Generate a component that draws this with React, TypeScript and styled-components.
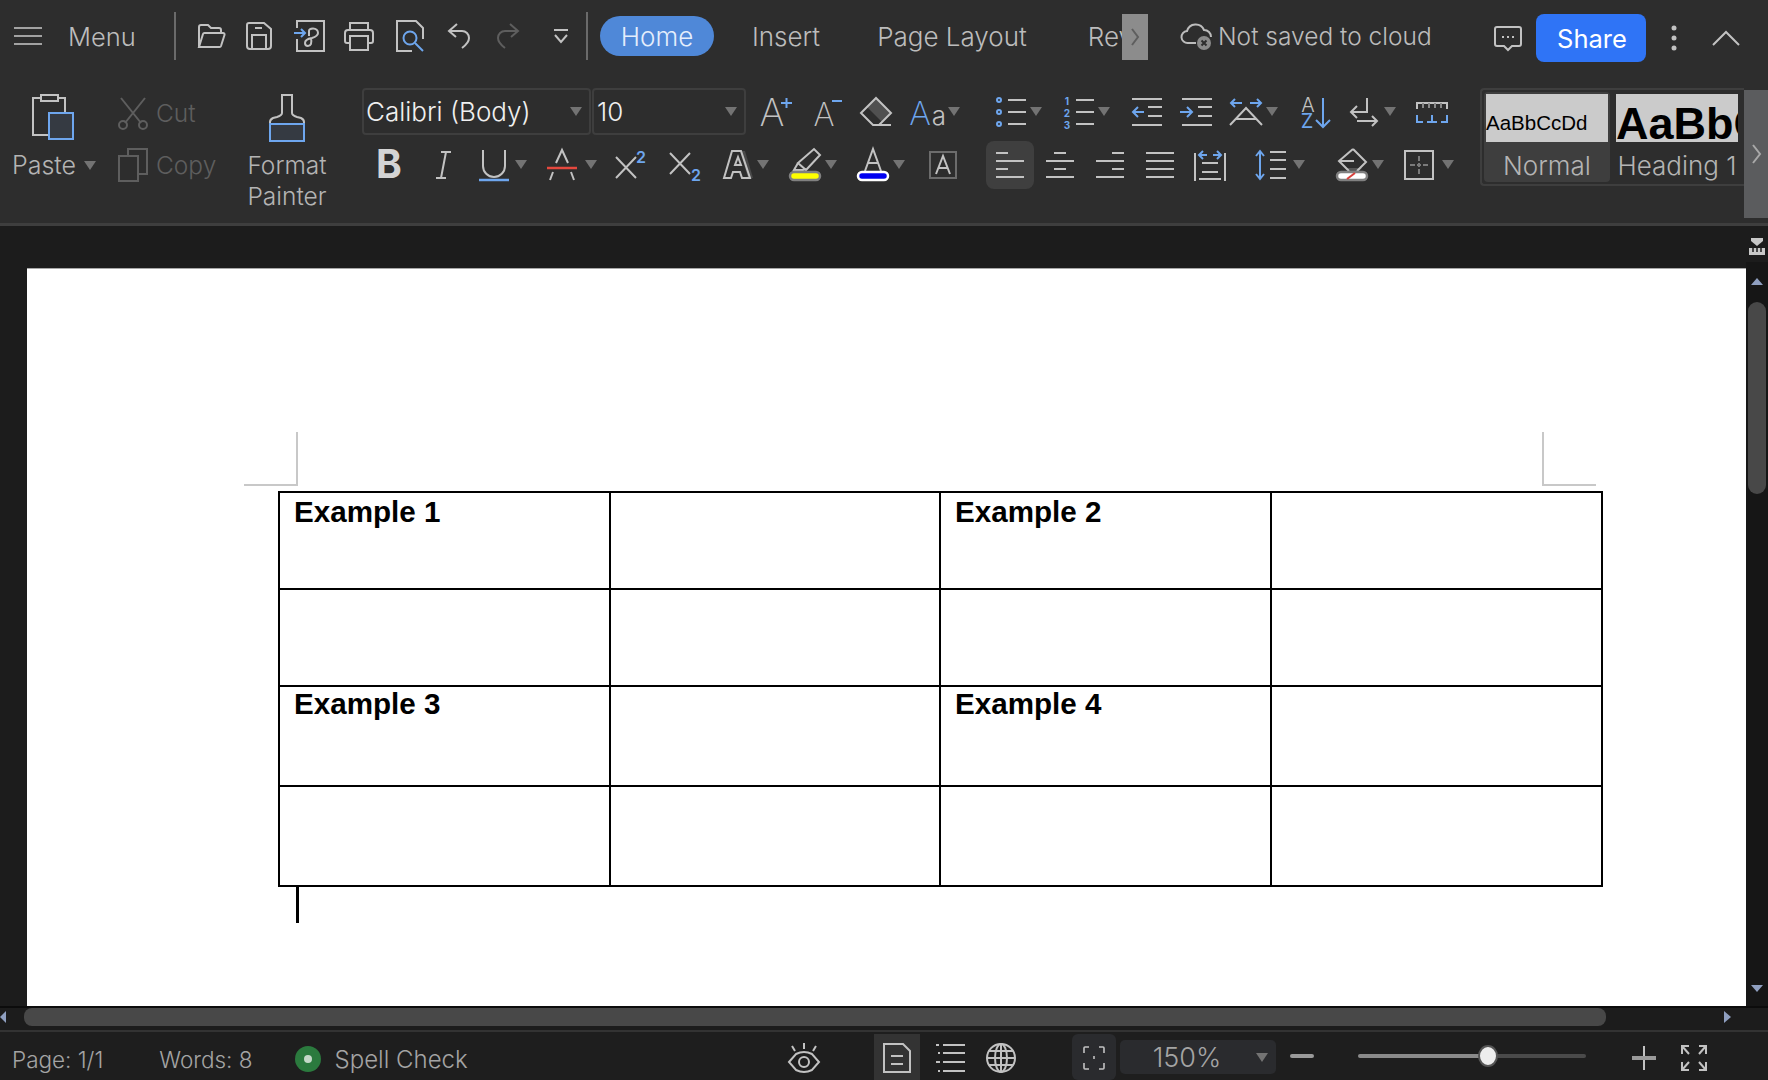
import React from "react";
import styled, { createGlobalStyle } from "styled-components";

const LIGHT = "#c2c2c2";
const DIM = "#5e5e5e";
const BLUE = "#6ea6ee";
const UI_FONT = `Inter, "Noto Sans", sans-serif`;

const GlobalStyle = createGlobalStyle`
  html, body {
    margin: 0;
    padding: 0;
    background: #1c1c1c;
    overflow: hidden;
  }
  * {
    box-sizing: border-box;
  }
`;

type SvgProps = { w: number; h: number; sw?: number; children: React.ReactNode };

const Svg = ({ w, h, sw = 2, children }: SvgProps) => (
  <svg
    width={w}
    height={h}
    viewBox={`0 0 ${w} ${h}`}
    fill="none"
    stroke="currentColor"
    strokeWidth={sw}
    style={{ display: "block", overflow: "visible" }}
  >
    {children}
  </svg>
);

// letters inside icons stay real text
const Letter = ({
  x,
  y,
  size,
  color = LIGHT,
  weight = 300,
  children,
}: {
  x: number;
  y: number;
  size: number;
  color?: string;
  weight?: number;
  children: React.ReactNode;
}) => (
  <text
    x={x}
    y={y}
    fontSize={size}
    fontWeight={weight}
    fontFamily={UI_FONT}
    fill={color}
    stroke="none"
    textAnchor="middle"
  >
    {children}
  </text>
);

const MenuIcon = () => (
  <Svg w={28} h={18}>
    <path d="M0 1h28M0 9h28M0 17h28" stroke="#a2a2a2" />
  </Svg>
);
const FolderIcon = () => (
  <Svg w={30} h={26}>
    <path d="M3 24V4a2 2 0 0 1 2-2h7l3 3h8a2 2 0 0 1 2 2v3" />
    <path d="M3 24l4-13a1.500 1.500 0 0 1 1.500-1H27a1.500 1.500 0 0 1 1.500 2L25 23a1.500 1.500 0 0 1-1.500 1z" />
  </Svg>
);
const SaveIcon = () => (
  <Svg w={26} h={28}>
    <path d="M3 1h15l7 6v17a3 3 0 0 1-3 3H4a3 3 0 0 1-3-3V3a2 2 0 0 1 2-2z" />
    <path d="M6 27V13h14v14M9 6h7" />
  </Svg>
);
const ImportIcon = () => (
  <Svg w={28} h={32}>
    <path d="M1 8V1h27v30H1V19" />
    <path d="M-2 13H9M5 9l4 4-4 4" stroke={BLUE} />
    <path d="M13 16V11c0-1.500 2-2.500 4-2.500 3 0 5 2 5 4.500 0 3-3 4-6 5-3 .5-7 2-7 5 0 2 1.500 3 3 3 3 0 4-3 3-8" />
  </Svg>
);
const PrintIcon = () => (
  <Svg w={30} h={30}>
    <path d="M6 9V2h18v7M6 22H3a2 2 0 0 1-2-2v-8a3 3 0 0 1 3-3h22a3 3 0 0 1 3 3v8a2 2 0 0 1-2 2h-3" />
    <rect x={6} y={15} width={18} height={14} />
  </Svg>
);
const PreviewIcon = () => (
  <Svg w={28} h={32}>
    <path d="M27 19V8l-7-7H1v30h15" />
    <circle cx={14} cy={18} r={6.500} stroke={BLUE} />
    <path d="M19 23l8 8" stroke={BLUE} />
  </Svg>
);
const UndoIcon = () => (
  <Svg w={24} h={26}>
    <path d="M10 1L2 8l7 6M2 8h13a7 7 0 0 1 7 7c0 3-3 7-7 10" />
  </Svg>
);
const RedoIcon = () => (
  <Svg w={24} h={26}>
    <path d="M14 1l8 7-7 6M22 8H9a7 7 0 0 0-7 7c0 3 3 7 7 10" />
  </Svg>
);
const QuickMoreIcon = () => (
  <Svg w={16} h={16}>
    <path d="M1 2h14M2 7l6 7 6-7" />
  </Svg>
);
const CloudIcon = () => (
  <Svg w={32} h={30}>
    <path d="M16 22H8a6 6 0 0 1-1-12 9 9 0 0 1 17-1c4 0 7 3 7 7" />
    <circle cx={24} cy={22} r={7} fill="#8a8a8a" stroke="none" />
    <path d="M21.500 19.500l5 5M26.500 19.500l-5 5" stroke="#2d2d2d" />
  </Svg>
);
const CommentIcon = () => (
  <Svg w={28} h={25}>
    <path d="M3 1h22a2 2 0 0 1 2 2v15a2 2 0 0 1-2 2h-7l-4 4-4-4H3a2 2 0 0 1-2-2V3a2 2 0 0 1 2-2z" />
    <path d="M8 11h2M13 11h2M18 11h2" />
  </Svg>
);
const DotsIcon = () => (
  <Svg w={6} h={26}>
    <circle cx={3} cy={3} r={2.500} fill="currentColor" stroke="none" />
    <circle cx={3} cy={13} r={2.500} fill="currentColor" stroke="none" />
    <circle cx={3} cy={23} r={2.500} fill="currentColor" stroke="none" />
  </Svg>
);
const CollapseIcon = () => (
  <Svg w={28} h={16}>
    <path d="M1 15L14 2l13 13" />
  </Svg>
);
const PasteIcon = () => (
  <Svg w={42} h={46}>
    <path d="M9 4H1v37h16" />
    <path d="M26 4h7v15" />
    <rect x={9} y={1} width={17} height={6} />
    <rect x={17} y={19} width={24} height={26} fill="#353a42" stroke={BLUE} />
  </Svg>
);
const CutIcon = () => (
  <Svg w={30} h={32}>
    <path d="M3 1l20 25M27 1L7 26" />
    <circle cx={5} cy={28} r={4} />
    <circle cx={25} cy={28} r={4} />
  </Svg>
);
const CopyIcon = () => (
  <Svg w={30} h={34}>
    <path d="M10 8V1h19v25H20" />
    <rect x={1} y={8} width={19} height={25} />
  </Svg>
);
const PainterIcon = () => (
  <Svg w={36} h={48}>
    <path d="M13 1h10v18c0 2 2 3 5 4l4 1c2 1 3 2 3 4v2H1v-2c0-2 1-3 3-4l4-1c3-1 5-2 5-4z" />
    <rect x={1} y={30} width={34} height={17} fill="#353a42" stroke={BLUE} />
  </Svg>
);
const GrowIcon = () => (
  <Svg w={32} h={30}>
    <Letter x={12} y={29} size={38} weight={200}>A</Letter>
    <path d="M21 6h11M26.500 1v10" stroke={BLUE} />
  </Svg>
);
const ShrinkIcon = () => (
  <Svg w={28} h={30}>
    <Letter x={10} y={29} size={32} weight={200}>A</Letter>
    <path d="M18 4h10" stroke={BLUE} />
  </Svg>
);
const EraserIcon = () => (
  <Svg w={32} h={30}>
    <path d="M16 1l15 15-9 9L7 10z" fill="#505050" stroke="none" />
    <path d="M1 16L16 1l15 15-12 12H13z" />
    <path d="M13 28h18" />
  </Svg>
);
const CaseIcon = () => (
  <Svg w={36} h={30}>
    <Letter x={10} y={28} size={33} weight={200} color={BLUE}>A</Letter>
    <Letter x={29} y={28} size={26}>a</Letter>
  </Svg>
);
const BulletIcon = () => (
  <Svg w={30} h={30}>
    <circle cx={3} cy={3} r={2} stroke={BLUE} />
    <circle cx={3} cy={15} r={2} stroke={BLUE} />
    <circle cx={3} cy={27} r={2} stroke={BLUE} />
    <path d="M12 3h18M12 15h18M12 27h18" />
  </Svg>
);
const NumberIcon = () => (
  <Svg w={30} h={30}>
    <Letter x={3} y={8} size={10} weight={700} color={BLUE}>1</Letter>
    <Letter x={3} y={20} size={10} weight={700} color={BLUE}>2</Letter>
    <Letter x={3} y={32} size={10} weight={700} color={BLUE}>3</Letter>
    <path d="M12 3h18M12 15h18M12 27h18" />
  </Svg>
);
const OutdentIcon = () => (
  <Svg w={30} h={28}>
    <path d="M0 1h30M16 9h14M16 18h14M0 27h30" />
    <path d="M12 14H1M6 9l-5 5 5 5" stroke={BLUE} />
  </Svg>
);
const IndentIcon = () => (
  <Svg w={32} h={28}>
    <path d="M2 1h30M18 9h14M18 18h14M2 27h30" />
    <path d="M0 14h11M7 9l5 5-5 5" stroke={BLUE} />
  </Svg>
);
const LayoutIcon = () => (
  <Svg w={32} h={30}>
    <path d="M0 28L16 11l16 17M6 22h20" />
    <path d="M1 6h11M5 2L1 6l4 4M31 6H20M27 2l4 4-4 4" stroke={BLUE} />
  </Svg>
);
const SortIcon = () => (
  <Svg w={30} h={32}>
    <Letter x={8} y={16} size={20} weight={300}>A</Letter>
    <Letter x={7} y={32} size={20} weight={400} color={BLUE}>Z</Letter>
    <path d="M23 2v29M16 24l7 7 7-7" stroke={BLUE} />
  </Svg>
);
const ParaIcon = () => (
  <Svg w={28} h={30}>
    <path d="M17 1v14H1M7 9l-6 6 6 6" />
    <path d="M7 24h20M22 19l5 5-5 5" />
  </Svg>
);
const RulerIcon = () => (
  <Svg w={32} h={22}>
    <path d="M1 8V2h30v6" />
    <path d="M7 2v5M13 2v5M19 2v5M25 2v5" stroke="#8a8a8a" />
    <path d="M1 14v7h6M31 14v7h-6M11 21h10M16 14v7" stroke={BLUE} />
  </Svg>
);
const BoldIcon = () => (
  <Svg w={24} h={28}>
    <Letter x={12} y={27} size={39} weight={700} color="#d4d4d4">B</Letter>
  </Svg>
);
const ItalicIcon = () => (
  <Svg w={15} h={28}>
    <path d="M5 1h10M0 27h10M10 1L5 27" />
  </Svg>
);
const UnderlineIcon = () => (
  <Svg w={30} h={32}>
    <path d="M4 1v16a11 11 0 0 0 22 0V1" />
    <path d="M0 31h30" stroke={BLUE} strokeWidth={2.500} />
  </Svg>
);
const ColorAIcon = () => (
  <Svg w={30} h={32}>
    <path d="M9 14L15 1l6 13M6 23l-3 8M24 23l3 8" />
    <path d="M0 19h30" stroke="#e5483e" strokeWidth={2.500} />
  </Svg>
);
const SuperIcon = () => (
  <Svg w={32} h={30}>
    <path d="M1 7l20 21M21 7L1 28" />
    <Letter x={26} y={13} size={16} weight={600} color={BLUE}>2</Letter>
  </Svg>
);
const SubIcon = () => (
  <Svg w={32} h={30}>
    <path d="M1 3l20 21M21 3L1 24" />
    <Letter x={27} y={31} size={16} weight={600} color={BLUE}>2</Letter>
  </Svg>
);
const EffectIcon = () => (
  <Svg w={30} h={30}>
    <path d="M17 1h5l8 27h-5z" fill="#4a4a4a" stroke="none" />
    <path d="M9 1h9l9 27h-8l-2-6H10l-2 6H1zM12 15h6l-3-8z" />
  </Svg>
);
const HighlightIcon = () => (
  <Svg w={32} h={34}>
    <path d="M9 15L25 1l6 6-14 15z" />
    <path d="M9 15l-4 7h9l3-1" />
    <rect x={1} y={24} width={30} height={8} rx={4} fill="#ffff00" stroke="#808080" strokeWidth={2.500} />
  </Svg>
);
const FontColorIcon = () => (
  <Svg w={32} h={34}>
    <path d="M8 23L16 1l8 22M10.500 15h11" />
    <rect x={1} y={24} width={30} height={8} rx={4} fill="#0000f0" stroke="#ffffff" strokeWidth={2.500} />
  </Svg>
);
const CharBoxIcon = () => (
  <Svg w={28} h={28}>
    <rect x={1} y={1} width={26} height={26} stroke="#6c6c6c" />
    <path d="M7 23L14 5l7 18M9 17h10" />
  </Svg>
);
const AlignIcon = ({ rows }: { rows: [number, number][] }) => (
  <Svg w={28} h={26}>
    {rows.map(([from, to], i) => (
      <path key={i} d={`M${from} ${1 + i * 8}H${to}`} />
    ))}
  </Svg>
);
const DistributeIcon = () => (
  <Svg w={32} h={32}>
    <path d="M1 4v28M31 4v28" />
    <path d="M8 14h16M8 23h16M5 30h22" />
    <path d="M5 6h8M9 2L5 6l4 4M27 6h-8M23 2l4 4-4 4" stroke={BLUE} />
  </Svg>
);
const SpacingIcon = () => (
  <Svg w={31} h={32}>
    <path d="M5 2v28M1 7l4-5 4 5M1 25l4 5 4-5" stroke={BLUE} />
    <path d="M15 3h16M15 11h16M15 20h16M15 29h16" />
  </Svg>
);
const ShadeIcon = () => (
  <Svg w={32} h={34}>
    <path d="M11 20h15l-4 4H13z" fill="#555555" stroke="none" />
    <path d="M17 1L3 13l10 10M17 1l13 13-9 9M3 13h15" />
    <rect x={1} y={24} width={30} height={8} rx={4} fill="#ffffff" stroke="#808080" strokeWidth={2.500} />
    <path d="M11 31l8-6" stroke="#d8403c" />
  </Svg>
);
const BorderIcon = () => (
  <Svg w={30} h={30}>
    <rect x={1} y={1} width={28} height={28} />
    <path d="M15 6v5M15 13v4M15 19v5M6 15h5M13 15h4M19 15h5" stroke="#7a7a7a" />
  </Svg>
);
const SectionIcon = () => (
  <Svg w={18} h={18} sw={0}>
    <path d="M3 0h12v3l-6 5-6-5z" fill="#c8c8c8" />
    <path d="M1 10h16v7H1z" fill="#c8c8c8" />
    <path d="M5 10v4M9 10v4M13 10v4" stroke="#1c1c1c" strokeWidth={1.500} />
  </Svg>
);
const EyeIcon = () => (
  <Svg w={32} h={30}>
    <path d="M1 19L8 11q8-4 16 0l7 8-7 8q-8 4-16 0z" />
    <circle cx={16} cy={19} r={5} />
    <path d="M16 0v6M4 3l3 5M28 3l-3 5" />
  </Svg>
);
const DocIcon = () => (
  <Svg w={28} h={30}>
    <path d="M1 1h19l7 7v21H1z" />
    <path d="M8 13h12M8 21h12" />
  </Svg>
);
const OutlineIcon = () => (
  <Svg w={30} h={28}>
    <path d="M8 1h22M1 1h3M8 9h22M3 9h2M8 18h22M1 18h4M8 27h22M3 27h2" />
  </Svg>
);
const GlobeIcon = () => (
  <Svg w={30} h={30}>
    <circle cx={15} cy={15} r={14} />
    <ellipse cx={15} cy={15} rx={6} ry={14} />
    <path d="M1 15h28M3 8h24M3 22h24M15 1v28" />
  </Svg>
);
const FocusIcon = () => (
  <Svg w={22} h={24} sw={1.600}>
    <path d="M1 7V2a1 1 0 0 1 1-1h4M21 7V2a1 1 0 0 0-1-1h-4M1 17v5a1 1 0 0 0 1 1h4M21 17v5a1 1 0 0 1-1 1h-4" />
    <path d="M11 10v3" />
  </Svg>
);
const PlusIcon = () => (
  <Svg w={24} h={24}>
    <path d="M12 0v24" strokeWidth={2} />
    <path d="M0 12h24" strokeWidth={4} stroke="#9a9a9a" />
  </Svg>
);
const FullIcon = () => (
  <Svg w={28} h={28}>
    <path d="M2 2l7 8M2 10V2h7M26 2l-7 8M26 10V2h-7M2 26l7-8M2 18v8h7M26 26l-7-8M26 18v8h-7" />
  </Svg>
);

const Shell = styled.div`
  width: 1768px;
  height: 1080px;
  display: flex;
  flex-direction: column;
  background: #1c1c1c;
  font-family: ${UI_FONT};
  overflow: hidden;
`;

const Header = styled.header`
  height: 72px;
  flex: none;
  display: flex;
  align-items: center;
  padding: 0 28px 0 14px;
  background: #2d2d2d;
  color: ${LIGHT};
`;

const MenuLabel = styled.span`
  margin-left: 26px;
  width: 67px;
  font-size: 25.500px;
  font-weight: 300;
  color: #bcbcbc;
`;

const Divider = styled.i<{ $ml: number }>`
  display: block;
  flex: none;
  width: 2px;
  height: 48px;
  margin-left: ${(p) => p.$ml}px;
  background: #6a6a6a;
`;

const QuickGroup = styled.div`
  margin-left: 10px;
  display: flex;
  align-items: center;
`;

const QuickSlot = styled.span<{ $w: number; $dim?: boolean }>`
  width: ${(p) => p.$w}px;
  display: flex;
  justify-content: center;
  color: ${(p) => (p.$dim ? DIM : LIGHT)};
`;

const Tabs = styled.nav`
  width: 522px;
  margin-left: 12px;
  display: flex;
  align-items: center;
  overflow: hidden;
  white-space: nowrap;
`;

const Tab = styled.span<{ $active?: boolean; $ml?: number }>`
  flex: none;
  margin-left: ${(p) => p.$ml ?? 0}px;
  width: ${(p) => (p.$active ? "114px" : "auto")};
  height: 40px;
  line-height: 42px;
  text-align: center;
  border-radius: 20px;
  font-size: 26px;
  font-weight: 300;
  color: ${(p) => (p.$active ? "#e4eefc" : "#bcbcbc")};
  background: ${(p) => (p.$active ? "#4f88d8" : "transparent")};
`;

const TabScroll = styled.div`
  width: 26px;
  height: 46px;
  margin-top: 2px;
  flex: none;
  display: flex;
  align-items: center;
  justify-content: center;
  background: #8c8c8c;
  color: #5e5e5e;
`;

const SaveState = styled.div`
  margin-left: 32px;
  display: flex;
  align-items: center;
  gap: 6px;
  font-size: 24.500px;
  font-weight: 300;
  color: #bcbcbc;
`;

const HeaderEnd = styled.div`
  margin-left: auto;
  margin-top: 4px;
  display: flex;
  align-items: center;
`;

const ShareButton = styled.button`
  width: 110px;
  height: 48px;
  margin: 0 25px 0 14px;
  padding: 0 0 0 2px;
  border: none;
  border-radius: 8px;
  background: #2f74f6;
  color: #fff;
  font: 400 25.500px ${UI_FONT};
`;

const CollapseBox = styled.span`
  margin-left: 35px;
`;

const Ribbon = styled.section`
  height: 154px;
  flex: none;
  display: flex;
  background: #2d2d2d;
  border-bottom: 3px solid #3e3e3e;
  color: ${LIGHT};
`;

const PasteGroup = styled.div`
  width: 118px;
  padding: 22px 0 0 12px;
  flex: none;
`;

const PasteLabel = styled.div`
  margin-top: 10px;
  display: flex;
  align-items: center;
  gap: 8px;
  font-size: 25px;
  font-weight: 300;
  color: #b4b4b4;
`;

const IconInset = styled.div`
  margin-left: 20px;
`;

const ClipGroup = styled.div`
  width: 128px;
  padding-top: 24px;
  flex: none;
  display: flex;
  flex-direction: column;
  gap: 19px;
`;

const ClipItem = styled.div`
  height: 33px;
  display: flex;
  align-items: center;
  gap: 8px;
  font-size: 24.500px;
  font-weight: 300;
  color: ${DIM};
`;

const PainterGroup = styled.div`
  width: 116px;
  padding-top: 22px;
  flex: none;
  display: flex;
  flex-direction: column;
  align-items: flex-start;
`;

const PainterLabel = styled.div`
  width: 82px;
  margin-top: 8px;
  text-align: center;
  font-size: 24.500px;
  line-height: 31px;
  font-weight: 300;
  color: #b4b4b4;
`;

const PainterIconBox = styled.div`
  width: 82px;
  display: flex;
  justify-content: center;
`;

const FormatPanel = styled.div`
  width: 1118px;
  flex: none;
  padding-top: 16px;
  display: flex;
  flex-direction: column;
  gap: 5px;
`;

const ToolRow = styled.div<{ $lower?: boolean }>`
  height: 47px;
  padding-top: ${(p) => (p.$lower ? "2px" : "0")};
  display: flex;
  align-items: center;
`;

const Tool = styled.span<{ $w: number; $ml?: number; $active?: boolean }>`
  flex: none;
  width: ${(p) => p.$w}px;
  margin-left: ${(p) => p.$ml ?? 0}px;
  height: ${(p) => (p.$active ? "48px" : "auto")};
  display: flex;
  align-items: center;
  justify-content: center;
  border-radius: 8px;
  background: ${(p) => (p.$active ? "#3f3f3f" : "transparent")};
`;

const Caret = styled.i<{ $ml?: number }>`
  flex: none;
  display: block;
  width: 0;
  height: 0;
  margin-left: ${(p) => p.$ml ?? 4}px;
  border-left: 6px solid transparent;
  border-right: 6px solid transparent;
  border-top: 9px solid #737373;
`;

const FieldBox = styled.div<{ $w: number; $ml?: number; $pad?: number }>`
  flex: none;
  width: ${(p) => p.$w}px;
  margin-left: ${(p) => p.$ml ?? 0}px;
  height: 47px;
  padding: 0 7px 0 ${(p) => p.$pad ?? 2}px;
  display: flex;
  align-items: center;
  justify-content: space-between;
  border: 2px solid #3e3e3e;
  border-radius: 4px;
  font-size: 26px;
  font-weight: 300;
  color: #f0f0f0;
`;

const Gallery = styled.div`
  width: 264px;
  height: 98px;
  flex: none;
  margin-top: 16px;
  padding: 2px 0 2px 2px;
  display: flex;
  gap: 4px;
  border: 2px solid #3e3e3e;
  border-right: none;
  border-radius: 4px 0 0 4px;
  overflow: hidden;
`;

const StyleCard = styled.div<{ $selected?: boolean }>`
  width: 126px;
  flex: none;
  padding: 2px;
  border-radius: 4px;
  background: ${(p) => (p.$selected ? "#3e3e3e" : "transparent")};
`;

const StylePreview = styled.div<{ $heading?: boolean }>`
  height: 48px;
  overflow: hidden;
  white-space: nowrap;
  background: #cbcbcb;
  color: #000;
  font-family: "Liberation Sans", Arial, sans-serif;
  font-size: ${(p) => (p.$heading ? "45px" : "20.500px")};
  font-weight: ${(p) => (p.$heading ? 700 : 400)};
  line-height: ${(p) => (p.$heading ? "60px" : "58px")};
`;

const StyleName = styled.div`
  height: 44px;
  line-height: 48px;
  text-align: center;
  white-space: nowrap;
  font-size: 26px;
  font-weight: 300;
  color: #b4b4b4;
`;

const GalleryScroll = styled.div`
  width: 24px;
  height: 128px;
  flex: none;
  margin-top: 18px;
  display: flex;
  align-items: center;
  justify-content: center;
  background: #5b5c5e;
  color: #a8a8a8;
`;

const Workspace = styled.main`
  flex: 1;
  min-height: 0;
  display: flex;
`;

const PageColumn = styled.div`
  width: 1746px;
  flex: none;
  padding: 42px 0 0 27px;
`;

const Page = styled.article`
  position: relative;
  height: 738px;
  padding: 222px 0 0 251px;
  border-top: 1px solid #a8a8a8;
  background: #fff;
`;

const CropMark = styled.i<{ $side: "left" | "right" }>`
  position: absolute;
  top: 163px;
  width: 54px;
  height: 54px;
  border-bottom: 2px solid #c8c8c8;
  ${(p) =>
    p.$side === "left"
      ? "left: 217px; border-right: 2px solid #c8c8c8;"
      : "left: 1515px; border-left: 2px solid #c8c8c8;"}
`;

const DocTable = styled.table`
  width: 1325px;
  table-layout: fixed;
  border-collapse: collapse;
  border: 2px solid #000;
`;

const DocRow = styled.tr<{ $h: number; $tight?: boolean }>`
  height: ${(p) => p.$h}px;
  td {
    padding-top: ${(p) => (p.$tight ? 0 : 1)}px;
    line-height: ${(p) => (p.$tight ? 34 : 36)}px;
  }
`;

const DocCell = styled.td`
  padding: 0 14px;
  vertical-align: top;
  border: 2px solid #000;
  font-family: "Liberation Sans", Arial, sans-serif;
  font-size: 29.600px;
  font-weight: 700;
  color: #000;
`;

const TextCursor = styled.div`
  width: 3px;
  height: 36px;
  margin-left: 18px;
  background: #000;
`;

const SideRail = styled.aside`
  width: 22px;
  flex: none;
  display: flex;
  flex-direction: column;
  align-items: center;
  color: #c8c8c8;
`;

const SectionSlot = styled.div`
  height: 36px;
  width: 100%;
  padding-top: 12px;
  display: flex;
  justify-content: center;
`;

const RailTrack = styled.div`
  flex: 1;
  width: 100%;
  padding: 16px 0 14px;
  display: flex;
  flex-direction: column;
  align-items: center;
  background: #161616;
`;

const ArrowV = styled.i<{ $down?: boolean }>`
  width: 0;
  height: 0;
  ${(p) => (p.$down ? "margin-top: auto;" : "")}
  border-left: 6px solid transparent;
  border-right: 6px solid transparent;
  ${(p) => (p.$down ? "border-top: 7px solid #8f9fc0;" : "border-bottom: 7px solid #8f9fc0;")}
`;

const RailThumb = styled.div`
  width: 18px;
  height: 192px;
  margin-top: 17px;
  border-radius: 9px;
  background: #484848;
`;

const HScroll = styled.div`
  height: 24px;
  flex: none;
  display: flex;
  align-items: center;
  border-top: 2px solid #0c0c0c;
  padding-bottom: 4px;
`;

const ArrowH = styled.i<{ $right?: boolean }>`
  flex: none;
  width: 0;
  height: 0;
  border-top: 6px solid transparent;
  border-bottom: 6px solid transparent;
  ${(p) =>
    p.$right
      ? "margin-left: 118px; border-left: 7px solid #8f9fc0;"
      : "border-right: 6px solid #8f9fc0;"}
`;

const HThumb = styled.div`
  width: 1582px;
  height: 18px;
  margin-left: 18px;
  border-radius: 8px;
  background: #484848;
`;

const StatusBar = styled.footer`
  height: 50px;
  flex: none;
  padding-top: 2px;
  display: flex;
  align-items: center;
  border-top: 2px solid #333;
  background: #1e1e1e;
  color: ${LIGHT};
`;

const StatusText = styled.span<{ $ml: number; $size?: number }>`
  flex: none;
  margin: 4px 0 0 ${(p) => p.$ml}px;
  font-size: ${(p) => p.$size ?? 22.5}px;
  font-weight: 300;
  color: #a4a4a4;
`;

const SpellDot = styled.i`
  flex: none;
  width: 26px;
  height: 26px;
  margin: 4px 0 0 42px;
  display: flex;
  align-items: center;
  justify-content: center;
  border-radius: 50%;
  background: #2b7a3e;
  &::after {
    content: "";
    width: 8px;
    height: 8px;
    border-radius: 50%;
    background: #c4d8c8;
  }
`;

const ViewButton = styled.span<{ $w: number; $ml: number; $on?: boolean; $tint?: string }>`
  flex: none;
  align-self: stretch;
  width: ${(p) => p.$w}px;
  margin-left: ${(p) => p.$ml}px;
  padding-top: 2px;
  display: flex;
  align-items: center;
  justify-content: center;
  border-radius: ${(p) => (p.$tint ? "6px" : "0")};
  background: ${(p) => (p.$on ? "#333" : p.$tint ?? "transparent")};
`;

const ZoomBox = styled.div`
  width: 156px;
  height: 34px;
  flex: none;
  margin-left: 4px;
  padding: 0 8px 0 33px;
  display: flex;
  align-items: center;
  justify-content: space-between;
  border-radius: 5px;
  background: #2a2b2e;
  font-size: 27px;
  font-weight: 300;
  color: #a4a4a4;
`;

const MinusBar = styled.i`
  width: 24px;
  height: 4px;
  margin: -2px 0 0 14px;
  border-radius: 2px;
  background: #9a9a9a;
`;

const Slider = styled.div`
  position: relative;
  width: 228px;
  height: 4px;
  flex: none;
  margin: -2px 0 0 44px;
  border-radius: 2px;
  background: linear-gradient(to right, #8a8a8a 0 56%, #4a4a4a 56% 100%);
`;

const SliderKnob = styled.i`
  position: absolute;
  left: 120px;
  top: -9px;
  width: 20px;
  height: 22px;
  border-radius: 50%;
  border: 2px solid #555;
  background: #ededed;
`;

const normalRows: [number, number][] = [
  [0, 12],
  [0, 28],
  [0, 12],
  [0, 28],
];
const centerRows: [number, number][] = [
  [8, 20],
  [0, 28],
  [8, 20],
  [0, 28],
];
const rightRows: [number, number][] = [
  [16, 28],
  [0, 28],
  [16, 28],
  [0, 28],
];
const justifyRows: [number, number][] = [
  [0, 28],
  [0, 28],
  [0, 28],
  [0, 28],
];

const columnWidths = [331, 330, 331, 331];

const tableRows = [
  { h: 97, cells: ["Example 1", "", "Example 2", ""] },
  { h: 97, cells: ["", "", "", ""] },
  { h: 100, tight: true, cells: ["Example 3", "", "Example 4", ""] },
  { h: 100, cells: ["", "", "", ""] },
];

export default function App() {
  return (
    <Shell>
      <GlobalStyle />
      <Header>
        <MenuIcon />
        <MenuLabel>Menu</MenuLabel>
        <Divider $ml={39} />
        <QuickGroup>
          <QuickSlot $w={50}><FolderIcon /></QuickSlot>
          <QuickSlot $w={46}><SaveIcon /></QuickSlot>
          <QuickSlot $w={56}><ImportIcon /></QuickSlot>
          <QuickSlot $w={42}><PrintIcon /></QuickSlot>
          <QuickSlot $w={60}><PreviewIcon /></QuickSlot>
          <QuickSlot $w={38}><UndoIcon /></QuickSlot>
          <QuickSlot $w={60} $dim><RedoIcon /></QuickSlot>
          <QuickSlot $w={46}><QuickMoreIcon /></QuickSlot>
        </QuickGroup>
        <Divider $ml={2} />
        <Tabs>
          <Tab $active>Home</Tab>
          <Tab $ml={38}>Insert</Tab>
          <Tab $ml={57}>Page Layout</Tab>
          <Tab $ml={61}>Review</Tab>
        </Tabs>
        <TabScroll>
          <Svg w={8} h={18}>
            <path d="M1 1l6 8-6 8" />
          </Svg>
        </TabScroll>
        <SaveState>
          <CloudIcon />
          Not saved to cloud
        </SaveState>
        <HeaderEnd>
          <CommentIcon />
          <ShareButton>Share</ShareButton>
          <DotsIcon />
          <CollapseBox><CollapseIcon /></CollapseBox>
        </HeaderEnd>
      </Header>

      <Ribbon>
        <PasteGroup>
          <IconInset><PasteIcon /></IconInset>
          <PasteLabel>
            Paste
            <Caret $ml={0} />
          </PasteLabel>
        </PasteGroup>
        <ClipGroup>
          <ClipItem><CutIcon />Cut</ClipItem>
          <ClipItem><CopyIcon />Copy</ClipItem>
        </ClipGroup>
        <PainterGroup>
          <PainterIconBox><PainterIcon /></PainterIconBox>
          <PainterLabel>Format Painter</PainterLabel>
        </PainterGroup>

        <FormatPanel>
          <ToolRow>
            <FieldBox $w={229}>
              Calibri (Body)
              <Caret />
            </FieldBox>
            <FieldBox $w={154} $ml={1} $pad={3}>
              10
              <Caret />
            </FieldBox>
            <Tool $w={32} $ml={14}><GrowIcon /></Tool>
            <Tool $w={28} $ml={22}><ShrinkIcon /></Tool>
            <Tool $w={32} $ml={18}><EraserIcon /></Tool>
            <Tool $w={36} $ml={18}><CaseIcon /></Tool>
            <Caret $ml={2} />
            <Tool $w={30} $ml={36}><BulletIcon /></Tool>
            <Caret />
            <Tool $w={30} $ml={22}><NumberIcon /></Tool>
            <Caret />
            <Tool $w={30} $ml={22}><OutdentIcon /></Tool>
            <Tool $w={32} $ml={18}><IndentIcon /></Tool>
            <Tool $w={32} $ml={18}><LayoutIcon /></Tool>
            <Caret />
            <Tool $w={30} $ml={22}><SortIcon /></Tool>
            <Tool $w={28} $ml={20}><ParaIcon /></Tool>
            <Caret $ml={6} />
            <Tool $w={32} $ml={20}><RulerIcon /></Tool>
          </ToolRow>
          <ToolRow $lower>
            <Tool $w={24} $ml={15}><BoldIcon /></Tool>
            <Tool $w={15} $ml={35}><ItalicIcon /></Tool>
            <Tool $w={30} $ml={28}><UnderlineIcon /></Tool>
            <Caret $ml={6} />
            <Tool $w={30} $ml={20}><ColorAIcon /></Tool>
            <Caret $ml={8} />
            <Tool $w={32} $ml={18}><SuperIcon /></Tool>
            <Tool $w={32} $ml={22}><SubIcon /></Tool>
            <Tool $w={30} $ml={22}><EffectIcon /></Tool>
            <Caret />
            <Tool $w={32} $ml={20}><HighlightIcon /></Tool>
            <Caret />
            <Tool $w={32} $ml={20}><FontColorIcon /></Tool>
            <Caret />
            <Tool $w={28} $ml={24}><CharBoxIcon /></Tool>
            <Tool $w={48} $ml={29} $active><AlignIcon rows={normalRows} /></Tool>
            <Tool $w={28} $ml={12}><AlignIcon rows={centerRows} /></Tool>
            <Tool $w={28} $ml={22}><AlignIcon rows={rightRows} /></Tool>
            <Tool $w={28} $ml={22}><AlignIcon rows={justifyRows} /></Tool>
            <Tool $w={32} $ml={20}><DistributeIcon /></Tool>
            <Tool $w={31} $ml={29}><SpacingIcon /></Tool>
            <Caret $ml={7} />
            <Tool $w={32} $ml={31}><ShadeIcon /></Tool>
            <Caret />
            <Tool $w={30} $ml={20}><BorderIcon /></Tool>
            <Caret $ml={8} />
          </ToolRow>
        </FormatPanel>

        <Gallery>
          <StyleCard $selected>
            <StylePreview>AaBbCcDd</StylePreview>
            <StyleName>Normal</StyleName>
          </StyleCard>
          <StyleCard>
            <StylePreview $heading>AaBbCc</StylePreview>
            <StyleName>Heading 1</StyleName>
          </StyleCard>
        </Gallery>
        <GalleryScroll>
          <Svg w={9} h={20}>
            <path d="M1 1l7 9-7 9" />
          </Svg>
        </GalleryScroll>
      </Ribbon>

      <Workspace>
        <PageColumn>
          <Page>
            <CropMark $side="left" />
            <CropMark $side="right" />
            <DocTable>
              <colgroup>
                {columnWidths.map((w, i) => (
                  <col key={i} width={w} />
                ))}
              </colgroup>
              <tbody>
                {tableRows.map((row, r) => (
                  <DocRow key={r} $h={row.h} $tight={row.tight}>
                    {row.cells.map((text, c) => (
                      <DocCell key={c}>{text}</DocCell>
                    ))}
                  </DocRow>
                ))}
              </tbody>
            </DocTable>
            <TextCursor />
          </Page>
        </PageColumn>
        <SideRail>
          <SectionSlot><SectionIcon /></SectionSlot>
          <RailTrack>
            <ArrowV />
            <RailThumb />
            <ArrowV $down />
          </RailTrack>
        </SideRail>
      </Workspace>

      <HScroll>
        <ArrowH />
        <HThumb />
        <ArrowH $right />
      </HScroll>

      <StatusBar>
        <StatusText $ml={12}>Page: 1/1</StatusText>
        <StatusText $ml={56}>Words: 8</StatusText>
        <SpellDot />
        <StatusText $ml={14} $size={24}>Spell Check</StatusText>
        <ViewButton $w={32} $ml={320}><EyeIcon /></ViewButton>
        <ViewButton $w={46} $ml={54} $on><DocIcon /></ViewButton>
        <ViewButton $w={30} $ml={15}><OutlineIcon /></ViewButton>
        <ViewButton $w={30} $ml={21}><GlobeIcon /></ViewButton>
        <ViewButton $w={44} $ml={56} $tint="#2a2b2e"><FocusIcon /></ViewButton>
        <ZoomBox>
          150%
          <Caret />
        </ZoomBox>
        <MinusBar />
        <Slider>
          <SliderKnob />
        </Slider>
        <ViewButton $w={24} $ml={46}><PlusIcon /></ViewButton>
        <ViewButton $w={28} $ml={24}><FullIcon /></ViewButton>
      </StatusBar>
    </Shell>
  );
}
